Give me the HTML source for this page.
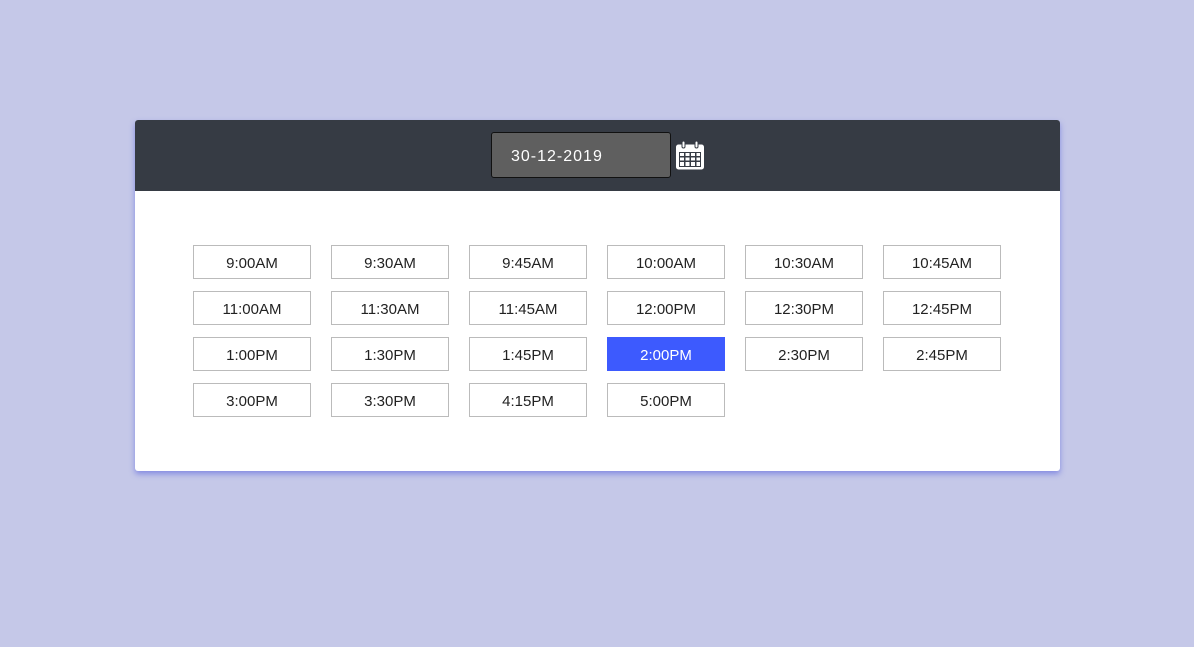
<!DOCTYPE html>
<html><head><style>
body{margin:0;width:1194px;height:647px;background:#c5c8e8;font-family:"Liberation Sans",sans-serif;position:relative;overflow:hidden}
.card{position:absolute;left:135px;top:120px;width:925px;height:351px;background:#fff;border-radius:3px;box-shadow:0 3px 6px rgba(80,90,220,.55);overflow:hidden}
.hdr{height:71px;background:#363b44;position:relative}
.inp{position:absolute;left:356px;top:12px;background:#5f5f5f;border:1px solid #111;border-radius:3px;color:#fff;font-size:16px;letter-spacing:1px;line-height:47px;padding-left:19px;box-sizing:border-box;width:180px;height:46px}
.ic{position:absolute;left:540px;top:20px}
.b{position:absolute;width:118px;height:34px;box-sizing:border-box;border:1px solid #bbb;text-align:center;line-height:35px;font-size:15px;color:#222}
.s{background:#3d5afe;color:#fff;border-color:#3d5afe}
</style></head><body>
<div class="card"><div class="hdr"><div class="inp">30-12-2019</div>
<svg class="ic" width="30" height="31" viewBox="0 0 30 31"><rect x="1.5" y="5" width="27" height="24" rx="2" fill="#fff" stroke="#fff"/><rect x="7" y="1" width="3" height="7" rx="1.5" fill="#fff" stroke="#363b44"/><rect x="20" y="1" width="3" height="7" rx="1.5" fill="#fff" stroke="#363b44"/><rect x="4" y="12" width="22" height="15" fill="#363b44"/><g fill="#fff"><rect x="5" y="13" width="4" height="3"/><rect x="10.5" y="13" width="4" height="3"/><rect x="16" y="13" width="4" height="3"/><rect x="21.5" y="13" width="3.5" height="3"/><rect x="5" y="17.5" width="4" height="3"/><rect x="10.5" y="17.5" width="4" height="3"/><rect x="16" y="17.5" width="4" height="3"/><rect x="21.5" y="17.5" width="3.5" height="3"/><rect x="5" y="22" width="4" height="4"/><rect x="10.5" y="22" width="4" height="4"/><rect x="16" y="22" width="4" height="4"/><rect x="21.5" y="22" width="3.5" height="4"/></g></svg>
</div>
<div class="b" style="left:58px;top:125px">9:00AM</div><div class="b" style="left:196px;top:125px">9:30AM</div><div class="b" style="left:334px;top:125px">9:45AM</div><div class="b" style="left:472px;top:125px">10:00AM</div><div class="b" style="left:610px;top:125px">10:30AM</div><div class="b" style="left:748px;top:125px">10:45AM</div>
<div class="b" style="left:58px;top:171px">11:00AM</div><div class="b" style="left:196px;top:171px">11:30AM</div><div class="b" style="left:334px;top:171px">11:45AM</div><div class="b" style="left:472px;top:171px">12:00PM</div><div class="b" style="left:610px;top:171px">12:30PM</div><div class="b" style="left:748px;top:171px">12:45PM</div>
<div class="b" style="left:58px;top:217px">1:00PM</div><div class="b" style="left:196px;top:217px">1:30PM</div><div class="b" style="left:334px;top:217px">1:45PM</div><div class="b s" style="left:472px;top:217px">2:00PM</div><div class="b" style="left:610px;top:217px">2:30PM</div><div class="b" style="left:748px;top:217px">2:45PM</div>
<div class="b" style="left:58px;top:263px">3:00PM</div><div class="b" style="left:196px;top:263px">3:30PM</div><div class="b" style="left:334px;top:263px">4:15PM</div><div class="b" style="left:472px;top:263px">5:00PM</div>
</div>
</body></html>
